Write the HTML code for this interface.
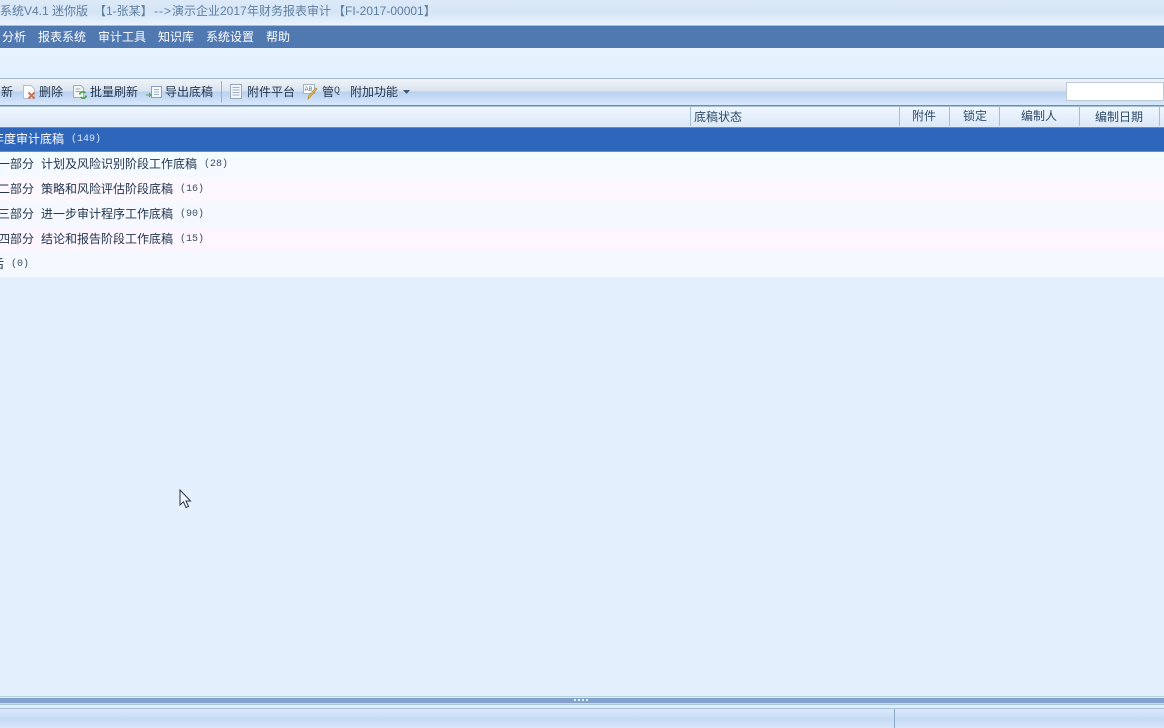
<!DOCTYPE html>
<html lang="zh">
<head>
<meta charset="utf-8">
<title>审计系统</title>
<style>
html,body{margin:0;padding:0;width:1164px;height:728px;overflow:hidden;background:#e4effd}
body{position:relative;font-family:"Liberation Sans","WenQuanYi Zen Hei","Noto Sans CJK SC",sans-serif;font-size:12px}
.b{position:absolute;left:0;width:1164px}
.t{position:absolute;white-space:nowrap;font-size:12px;line-height:14px;color:#22364e}
.n{position:absolute;white-space:nowrap;font-family:"Liberation Mono",monospace;font-size:10px;line-height:14px;color:#3c4f66}
.m{color:#fff;top:30px}
.h{top:110px;color:#2f4a68}
.s{position:absolute;top:107px;width:1px;height:19px;background:#a9bdd3}
.ti{top:4px;color:#5f7f9f}
svg{position:absolute}
</style>
</head>
<body>
<div class="b" style="top:0;height:25px;background:linear-gradient(#dde9f7,#d5e5f6 12px,#e8f3fc)"></div>
<div class="b" style="top:25px;height:23px;background:#5078b1;border-top:1px solid #9fc3dc;box-sizing:border-box"></div>
<div class="b" style="top:48px;height:30px;background:linear-gradient(#e7f3ff,#e3f0fd)"></div>
<div class="b" style="top:78px;height:27px;background:linear-gradient(#aabccb 0,#aabccb 1px,#f0f4f9 1px,#dae3ef 13px,#b9d1f0 14px,#d8e8fb 27px)"></div>
<div class="b" style="top:105px;height:1px;background:#6e8fa5"></div>
<div class="b" style="top:106px;height:1px;background:#a9c0d0"></div>
<div class="b" style="top:107px;height:20px;background:linear-gradient(#eef7fe,#dce8f8)"></div>
<div class="b" style="top:127px;height:25px;background:#2e66bb;border-top:1px solid #6a8bbd;border-bottom:1px solid #6a8bbd;box-sizing:border-box"></div>
<div class="b" style="top:152px;height:25px;background:linear-gradient(#f3fdfc,#f4faff 10px)"></div>
<div class="b" style="top:177px;height:25px;background:#fdf7fe"></div>
<div class="b" style="top:202px;height:25px;background:#f5f9ff"></div>
<div class="b" style="top:227px;height:25px;background:#fdf6fe"></div>
<div class="b" style="top:252px;height:25px;background:#f4f9ff"></div>
<div class="b" style="top:696px;height:1px;background:#b5d3dc"></div>
<div class="b" style="top:697px;height:1px;background:#dcebf7"></div>
<div class="b" style="top:698px;height:5px;background:#84a0cc"></div>
<div class="b" style="top:703px;height:1px;background:#c5dcea"></div>
<div class="b" style="top:704px;height:1px;background:#a9c9d9"></div>
<div class="b" style="top:705px;height:3px;background:#dfedfa"></div>
<div class="b" style="top:708px;height:1px;background:#a9c0dc"></div>
<div class="b" style="top:709px;height:19px;background:linear-gradient(#dce9fa,#c6daf4 10px,#d8e6f8)"></div>
<div style="position:absolute;left:574px;top:699px;width:14px;height:2px;background:repeating-linear-gradient(90deg,#e8f1fb 0,#e8f1fb 2px,transparent 2px,transparent 4px)"></div>
<div style="position:absolute;left:894px;top:709px;width:1px;height:19px;background:#8ea8c6"></div>
<div style="position:absolute;left:221px;top:81px;width:1px;height:22px;background:#9db2c8"></div>
<div style="position:absolute;left:1066px;top:82px;width:98px;height:19px;background:#fff;border:1px solid #bccbd9;box-sizing:border-box"></div>

<span class="t ti" style="left:0">系统V4.1 迷你版</span>
<span class="t ti" style="left:94px">【1-张某】</span>
<span class="t ti" style="left:154px;letter-spacing:1px">--&gt;</span>
<span class="t ti" style="left:172px">演示企业</span>
<span class="t ti" style="left:220px">2017</span>
<span class="t ti" style="left:247px">年财务报表审计</span>
<span class="t ti" style="left:333px">【FI-2017-00001】</span>

<span class="t m" style="left:2px">分析</span>
<span class="t m" style="left:38px">报表系统</span>
<span class="t m" style="left:98px">审计工具</span>
<span class="t m" style="left:158px">知识库</span>
<span class="t m" style="left:206px">系统设置</span>
<span class="t m" style="left:266px">帮助</span>

<span class="t" style="left:1px;top:85px">新</span>
<svg style="left:21px;top:84px" width="16" height="16" viewBox="0 0 16 16"><path d="M2.500 1.500H10L13.500 5V14.500H2.500Z" fill="#fff" stroke="#b4c0cc"/><path d="M7.500 8.500l6 6M13.500 8.500l-6 6" stroke="#dc6a4c" stroke-width="2"/></svg>
<span class="t" style="left:39px;top:85px">删除</span>
<svg style="left:72px;top:84px" width="16" height="16" viewBox="0 0 16 16"><path d="M1.500 1.500H9L11.500 4V13.500H1.500Z" fill="#f4f8f4" stroke="#a0b0b0"/><path d="M3.500 5h5M3.500 7.500h5" stroke="#9ab"/><path d="M7.500 10.500a3.500 3.500 0 0 1 6-1.500M14.500 11.500a3.500 3.500 0 0 1-6 1.500" fill="none" stroke="#4aa04a" stroke-width="1.600"/></svg>
<span class="t" style="left:90px;top:85px">批量刷新</span>
<svg style="left:146px;top:84px" width="16" height="16" viewBox="0 0 16 16"><rect x="5.500" y="2.500" width="10" height="11" fill="#f4f8fc" stroke="#8ba0b6"/><path d="M8 5.500h5M8 8h5M8 10.500h5" stroke="#9fb2c6"/><path d="M0 11h5M3 9l2 2-2 2" fill="none" stroke="#5a9a5a"/></svg>
<span class="t" style="left:165px;top:85px">导出底稿</span>
<svg style="left:229px;top:84px" width="14" height="16" viewBox="0 0 14 16"><rect x="1.500" y="0.500" width="11" height="14" fill="#f2f5f9" stroke="#9aa9ba"/><path d="M3.500 3.500h7M3.500 6h7M3.500 8.500h7M3.500 11h7" stroke="#a3b2c2"/></svg>
<span class="t" style="left:247px;top:85px">附件平台</span>
<svg style="left:303px;top:84px" width="16" height="16" viewBox="0 0 16 16"><rect x="0.500" y="0.500" width="11" height="9" fill="#fff" stroke="#9fb0c4"/><text x="1.500" y="7" font-size="6" font-family="Liberation Sans" fill="#4a6a9a">AB</text><path d="M14 5L7 13l-2 2 .5-3L12.500 4Z" fill="#e8bb55" stroke="#b58a30" stroke-width=".7"/></svg>
<span class="t" style="left:322px;top:85px">管</span>
<span class="n" style="left:334px;top:85px">Q</span>
<span class="t" style="left:350px;top:85px">附加功能</span>
<svg style="left:403px;top:90px" width="7" height="4" viewBox="0 0 7 4"><path d="M0 0H7L3.500 4Z" fill="#3f5a78"/></svg>

<div class="s" style="left:690px"></div>
<div class="s" style="left:899px"></div>
<div class="s" style="left:949px"></div>
<div class="s" style="left:999px"></div>
<div class="s" style="left:1079px"></div>
<div class="s" style="left:1159px"></div>
<span class="t h" style="left:694px">底稿状态</span>
<span class="t h" style="left:912px;top:109px">附件</span>
<span class="t h" style="left:963px;top:109px">锁定</span>
<span class="t h" style="left:1021px;top:109px">编制人</span>
<span class="t h" style="left:1095px">编制日期</span>

<span class="t" style="left:-8px;top:132px;color:#fff">年度审计底稿</span><span class="n" style="left:71px;top:133px;color:#dce8f8">(149)</span>
<span class="t" style="left:-2px;top:157px">一部分</span><span class="t" style="left:41px;top:157px">计划及风险识别阶段工作底稿</span><span class="n" style="left:204px;top:158px">(28)</span>
<span class="t" style="left:-2px;top:182px">二部分</span><span class="t" style="left:41px;top:182px">策略和风险评估阶段底稿</span><span class="n" style="left:180px;top:183px">(16)</span>
<span class="t" style="left:-2px;top:207px">三部分</span><span class="t" style="left:41px;top:207px">进一步审计程序工作底稿</span><span class="n" style="left:180px;top:208px">(90)</span>
<span class="t" style="left:-2px;top:232px">四部分</span><span class="t" style="left:41px;top:232px">结论和报告阶段工作底稿</span><span class="n" style="left:180px;top:233px">(15)</span>
<span class="t" style="left:-8px;top:257px">后</span><span class="n" style="left:11px;top:258px">(0)</span>

<svg style="left:178px;top:488px" width="15" height="22" viewBox="0 0 15 22"><path d="M2 2V17L5.500 13.800 8 19.500 10.500 18.400 8 13H12.500Z" fill="#f2f6fc" stroke="#2c3440" stroke-width="1"/></svg>
</body>
</html>
